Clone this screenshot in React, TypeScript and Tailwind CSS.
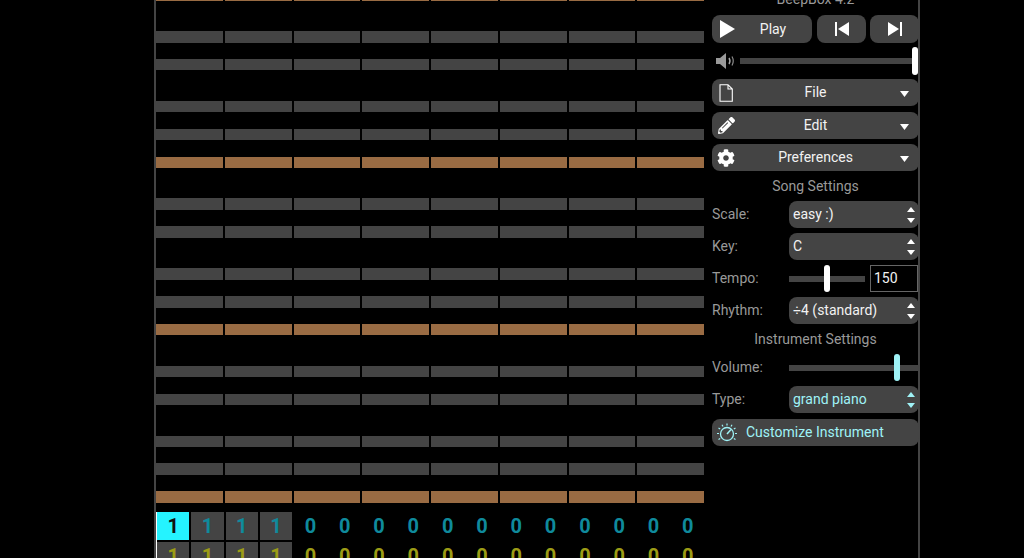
import { FaCog, FaPencilAlt } from 'react-icons/fa'

const noteRows = [
  { brown: true, className: 'h-[1px]' },
  { brown: false, className: 'mt-[30.1px]' },
  { brown: false, className: 'mt-[16.4px]' },
  { brown: false, className: 'mt-[30.35px]' },
  { brown: false, className: 'mt-[16.4px]' },
  { brown: true, className: 'mt-[16.4px]' },
  { brown: false, className: 'mt-[30.35px]' },
  { brown: false, className: 'mt-[16.4px]' },
  { brown: false, className: 'mt-[30.35px]' },
  { brown: false, className: 'mt-[16.4px]' },
  { brown: true, className: 'mt-[16.4px]' },
  { brown: false, className: 'mt-[30.35px]' },
  { brown: false, className: 'mt-[16.4px]' },
  { brown: false, className: 'mt-[30.35px]' },
  { brown: false, className: 'mt-[16.4px]' },
  { brown: true, className: 'mt-[16.4px]' },
]

const bars = Array.from({ length: 16 }, (_, i) => i)

function Chevrons({ cyan }: { cyan?: boolean }) {
  const fill = cyan ? '#9ff3f7' : '#ffffff'
  return (
    <svg width="12" height="24" viewBox="0 0 12 24" className="absolute right-[2px] top-[2px]">
      <polygon points="6,4 10,9 2,9" fill={fill} />
      <polygon points="2,15 10,15 6,20" fill={fill} />
    </svg>
  )
}

function Select({ value, cyan }: { value: string; cyan?: boolean }) {
  return (
    <div className={`relative flex h-[27px] w-[130px] items-center rounded-[8px] bg-[#444444] pl-[4px] text-[14px] ${cyan ? 'text-[#9ff3f7]' : 'text-[#f2f2f2]'}`}>
      {value}
      <Chevrons cyan={cyan} />
    </div>
  )
}

function MenuButton({ label, icon, className }: { label: string; icon: React.ReactNode; className?: string }) {
  return (
    <div className={`relative flex h-[27px] items-center justify-center rounded-[8px] bg-[#444444] text-[14px] text-[#f2f2f2] ${className ?? ''}`}>
      <div className="absolute left-[4px] top-0 flex h-full w-[20px] items-center justify-center">{icon}</div>
      {label}
      <svg width="9" height="6" viewBox="0 0 9 6" className="absolute right-[10px] top-[12px]">
        <polygon points="0,0 9,0 4.5,6" fill="#ffffff" />
      </svg>
    </div>
  )
}

function FormRow({ label, children }: { label: string; children: React.ReactNode }) {
  return (
    <div className="flex items-center justify-between">
      <span className="text-[14px] text-[#999999]">{label}</span>
      {children}
    </div>
  )
}

function Heading({ children }: { children: React.ReactNode }) {
  return <div className="flex h-[22px] items-center justify-center text-[14px] text-[#999999]">{children}</div>
}

export default function App() {
  return (
    <div className="h-[558px] w-[1024px] overflow-hidden bg-black pl-[154px] font-['Roboto',sans-serif]">
      <div className="flex h-full w-[766px] gap-[8px] border-x-2 border-[#444444]">
        {/* Pattern editor */}
        <div className="w-[548px] shrink-0">
          {noteRows.map((row, i) => (
            <div key={i} className={`grid grid-cols-8 gap-[2px] ${row.className}`}>
              {bars.slice(0, 8).map((b) => (
                <div key={b} className={`${i === 0 ? 'h-[1px]' : 'h-[11.5px]'} ${row.brown ? 'bg-[#996b43]' : 'bg-[#444444]'}`} />
              ))}
            </div>
          ))}

          {/* Track rows */}
          <div className="mt-[9px] grid grid-cols-16 gap-[2px] border-l border-white text-center text-[20px] font-bold leading-[28px]">
            {bars.map((b) => (
              <div key={b} className={`h-[28px] ${b === 0 ? 'bg-[#25f3ff] text-[#111111]' : b < 4 ? 'bg-[#444444] text-[#0f8a9c]' : 'text-[#0f8a9c]'}`}>
                {b < 4 ? 1 : 0}
              </div>
            ))}
            {bars.map((b) => (
              <div key={b} className={`h-[28px] ${b < 4 ? 'bg-[#444444] text-[#9c9c16]' : 'text-[#9c9c16]'}`}>
                {b < 4 ? 1 : 0}
              </div>
            ))}
          </div>
        </div>

        {/* Side panel */}
        <div className="w-[207px] shrink-0">
          <div className="flex h-[15px] items-end justify-center overflow-hidden pb-[7px] text-[14px] leading-[17px] text-[#999999]">
            BeepBox 4.2
          </div>

          <div className="flex gap-[4px]">
            <div className="relative mr-[1px] flex h-[28px] w-[100px] items-center justify-center rounded-[8px] bg-[#444444] pl-[22px] text-[14px] text-[#f2f2f2]">
              <svg width="16" height="18" viewBox="0 0 16 18" className="absolute left-[8px] top-[5px]">
                <polygon points="0,0 15,9 0,18" fill="#ffffff" />
              </svg>
              Play
            </div>
            <div className="flex h-[28px] w-[49px] items-center justify-center rounded-[8px] bg-[#444444]">
              <svg width="16" height="14" viewBox="0 0 16 14">
                <rect x="1" y="0" width="2" height="14" fill="#ffffff" />
                <polygon points="15,0 15,14 4,7" fill="#ffffff" />
              </svg>
            </div>
            <div className="flex h-[28px] w-[49px] items-center justify-center rounded-[8px] bg-[#444444]">
              <svg width="16" height="14" viewBox="0 0 16 14">
                <polygon points="1,0 1,14 12,7" fill="#ffffff" />
                <rect x="13" y="0" width="2" height="14" fill="#ffffff" />
              </svg>
            </div>
          </div>

          {/* Master volume */}
          <div className="relative mt-[4px] flex h-[28px] items-center gap-[4px] pl-[4px]">
            <svg width="20" height="16" viewBox="0 0 20 16">
              <polygon points="0,5 4,5 10,0 10,16 4,11 0,11" fill="#999999" />
              <path d="M13 5 Q15 8 13 11" stroke="#a8a8a8" strokeWidth="1.4" fill="none" />
              <path d="M16 3.5 Q18.5 8 16 12.5" stroke="#8a8a8a" strokeWidth="1.2" fill="none" />
            </svg>
            <div className="h-[6px] w-[175px] bg-[#444444]" />
            <div className="absolute right-[1px] top-0 h-[28px] w-[6px] rounded-[3px] bg-white" />
          </div>

          <div className="mt-[4px] flex flex-col gap-[5px]">
            <MenuButton
              className="mb-[1px]"
              label="File"
              icon={
                <svg width="14" height="18" viewBox="0 0 14 18">
                  <path d="M1 .7 H9 L13.3 5 V17.3 H1 Z M9 .7 V5 H13.3" fill="none" stroke="#ffffff" strokeWidth="1.1" />
                </svg>
              }
            />
            <MenuButton label="Edit" icon={<FaPencilAlt className="h-[17px] w-[17px] text-white" />} />
            <MenuButton label="Preferences" icon={<FaCog className="h-[18px] w-[18px] text-white" />} />
          </div>

          <div className="mt-[4px]">
            <Heading>Song Settings</Heading>
          </div>
          <div className="mt-[4px] flex flex-col gap-[5px]">
            <FormRow label="Scale:">
              <Select value="easy :)" />
            </FormRow>
            <FormRow label="Key:">
              <Select value="C" />
            </FormRow>
            <FormRow label="Tempo:">
              <div className="relative flex h-[27px] w-[130px] items-center gap-[5px]">
                <div className="h-[6px] w-[76px] bg-[#444444]" />
                <div className="absolute left-[35px] top-0 h-[27px] w-[6px] rounded-[3px] bg-white" />
                <div className="flex h-[27px] w-[48px] items-center border border-[#666666] bg-black pl-[3px] text-[14px] text-[#f2f2f2]">150</div>
              </div>
            </FormRow>
            <FormRow label="Rhythm:">
              <Select value="÷4 (standard)" />
            </FormRow>
          </div>

          <div className="mt-[4px]">
            <Heading>Instrument Settings</Heading>
          </div>
          <div className="mt-[4px] flex flex-col gap-[5px]">
            <FormRow label="Volume:">
              <div className="relative flex h-[27px] w-[130px] items-center">
                <div className="h-[6px] w-full bg-[#444444]" />
                <div className="absolute left-[105px] top-0 h-[27px] w-[6px] rounded-[3px] bg-[#9ff3f7]" />
              </div>
            </FormRow>
            <FormRow label="Type:">
              <Select value="grand piano" cyan />
            </FormRow>
            <div className="mt-[1px] flex h-[27px] items-center rounded-[8px] bg-[#444444] pl-[4px] text-[14px] text-[#9ff3f7]">
              <svg width="22" height="22" viewBox="0 0 22 22" className="mr-[8px]">
                <circle cx="11" cy="12" r="6.5" fill="none" stroke="#9ff3f7" strokeWidth="1.3" />
                <path d="M11 12 L15 7.5" stroke="#9ff3f7" strokeWidth="1.5" />
                <path d="M11 1.5 V3.5 M6 2.8 L7 4.5 M16 2.8 L15 4.5 M2.5 6 L4.2 7 M19.5 6 L17.8 7 M1 11.5 H3 M21 11.5 H19 M2.5 17.5 L4.2 16.5 M19.5 17.5 L17.8 16.5" stroke="#9ff3f7" strokeWidth="1.2" />
              </svg>
              Customize Instrument
            </div>
          </div>
        </div>
      </div>
    </div>
  )
}
